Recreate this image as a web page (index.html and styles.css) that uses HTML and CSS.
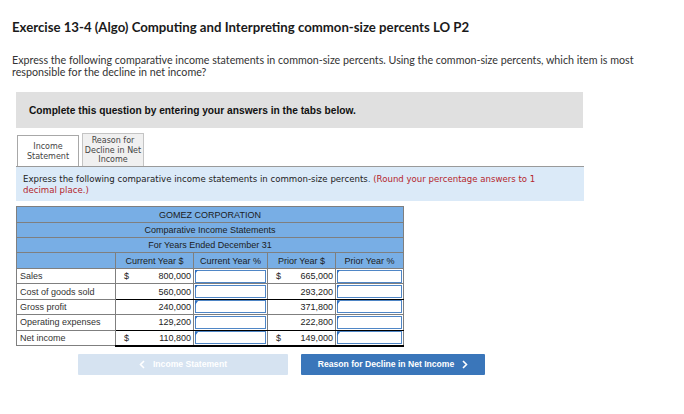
FILE: index.html
```html
<!DOCTYPE html>
<html>
<head>
<meta charset="utf-8">
<link rel="stylesheet" href="styles.css">
</head>
<body>
<h1 class="title">Exercise 13-4 (Algo) Computing and Interpreting common-size percents LO P2</h1>
<p class="intro">Express the following comparative income statements in common-size percents. Using the common-size percents, which item is most responsible for the decline in net income?</p>
<div class="panel">
  <div class="banner">Complete this question by entering your answers in the tabs below.</div>
  <div class="tabs">
    <div class="tab active">Income<br>Statement</div>
    <div class="tab">Reason for<br>Decline in Net<br>Income</div>
  </div>
  <div class="info">Express the following comparative income statements in common-size percents<span class="dot">.</span> <span class="red">(Round your percentage answers to 1</span><br><span class="red">decimal place.)</span></div>
  <table class="stmt">
    <colgroup>
      <col class="c1"><col class="c2"><col class="c3"><col class="c4"><col class="c5">
    </colgroup>
    <tr class="hd h1"><th colspan="5">GOMEZ CORPORATION</th></tr>
    <tr class="hd h2"><th colspan="5">Comparative Income Statements</th></tr>
    <tr class="hd h3"><th colspan="5">For Years Ended December 31</th></tr>
    <tr class="hd h4"><th></th><th>Current Year $</th><th>Current Year %</th><th>Prior Year $</th><th>Prior Year %</th></tr>
    <tr class="row">
      <td class="lbl">Sales</td>
      <td class="num"><span>$</span><span>800,000</span></td>
      <td class="in"><div class="box"></div></td>
      <td class="num"><span>$</span><span>665,000</span></td>
      <td class="in"><div class="box"></div></td>
    </tr>
    <tr class="row line">
      <td class="lbl">Cost of goods sold</td>
      <td class="num"><span></span><span>560,000</span></td>
      <td class="in"><div class="box"></div></td>
      <td class="num"><span></span><span>293,200</span></td>
      <td class="in"><div class="box"></div></td>
    </tr>
    <tr class="row">
      <td class="lbl">Gross profit</td>
      <td class="num"><span></span><span>240,000</span></td>
      <td class="in"><div class="box"></div></td>
      <td class="num"><span></span><span>371,800</span></td>
      <td class="in"><div class="box"></div></td>
    </tr>
    <tr class="row line">
      <td class="lbl">Operating expenses</td>
      <td class="num"><span></span><span>129,200</span></td>
      <td class="in"><div class="box"></div></td>
      <td class="num"><span></span><span>222,800</span></td>
      <td class="in"><div class="box"></div></td>
    </tr>
    <tr class="row total">
      <td class="lbl">Net income</td>
      <td class="num"><span>$</span><span>110,800</span></td>
      <td class="in"><div class="box"></div></td>
      <td class="num"><span>$</span><span>149,000</span></td>
      <td class="in"><div class="box"></div></td>
    </tr>
  </table>
  <div class="nav">
    <div class="btn prev"><svg width="6" height="9" viewBox="0 0 6 9"><path d="M5 1 L1.5 4.5 L5 8" fill="none" stroke="#fff" stroke-width="1.6"/></svg><span>Income Statement</span></div>
    <div class="btn next"><span>Reason for Decline in Net Income</span><svg width="6" height="9" viewBox="0 0 6 9"><path d="M1 1 L4.5 4.5 L1 8" fill="none" stroke="#fff" stroke-width="1.6"/></svg></div>
  </div>
</div>
</body>
</html>
```
FILE: styles.css
```css
html, body {
  margin: 0;
  padding: 0;
  background: #fff;
}
body {
  padding: 20px 0 0 12px;
  font-family: Lato, "Liberation Sans", sans-serif;
  color: #222;
}
.title {
  margin: 0;
  font-size: 13.2px;
  line-height: 15px;
  font-weight: 700;
  color: #1a1a1a;
}
.intro {
  margin: 19px 0 0 0;
  width: 640px;
  font-size: 10.7px;
  line-height: 12px;
  color: #333;
}
.panel {
  margin: 14px 0 0 4px;
  width: 568px;
}
.banner {
  height: 36px;
  width: 567px;
  box-sizing: border-box;
  background: #e0e0e0;
  padding-left: 13px;
  display: flex;
  align-items: center;
  font-family: "Liberation Sans", Arial, sans-serif;
  font-weight: 700;
  font-size: 10.2px;
  color: #111;
}
.tabs {
  display: flex;
  align-items: flex-end;
  gap: 3px;
  margin-top: 5px;
  padding-left: 1px;
}
.tab {
  box-sizing: border-box;
  width: 62px;
  height: 33px;
  border: 1px solid #c4c4c4;
  border-bottom: none;
  background: #f0f0f0;
  font-family: "DejaVu Sans", Verdana, sans-serif;
  font-size: 8px;
  line-height: 9.8px;
  color: #444;
  text-align: center;
  display: flex;
  align-items: center;
  justify-content: center;
  padding-top: 1px;
}
.tab.active {
  width: 62px;
  height: 31px;
  background: #fff;
  border-color: #a8a8a8;
}
.info {
  box-sizing: border-box;
  height: 35px;
  border-top: 1px solid #9a9a9a;
  background: #dbeaf8;
  padding: 7px 20px 0 7px;
  font-family: "DejaVu Sans", Verdana, sans-serif;
  font-size: 8.6px;
  line-height: 10.5px;
  color: #222;
}
.info .red { color: #b5262c; }
.info .dot { color: #2a6cc0; }
.stmt {
  margin-top: 5px;
  border-collapse: collapse;
  table-layout: fixed;
  width: 387px;
  font-family: "Liberation Sans", Arial, sans-serif;
  font-size: 9px;
  color: #222;
}
.c1 { width: 99px; }
.c2 { width: 78px; }
.c3 { width: 74px; }
.c4 { width: 68px; }
.c5 { width: 68px; }
.stmt th, .stmt td {
  border: 1px solid #7f7f7f;
  padding: 0;
}
.hd th {
  background: #78aee5;
  font-weight: 400;
  text-align: center;
  height: 14px;
  color: #1c1c1c;
}
.h1 th { height: 15px; }
.h4 th { height: 15px; }
.row td {
  height: 14.4px;
  background: #fff;
}
.lbl {
  padding-left: 3px !important;
  color: #333;
}
.num {
  padding: 0 2px 0 8px !important;
}
.num span:first-child {
  float: left;
}
.num span:last-child {
  float: right;
}
.in {
  position: relative;
}
.box {
  box-sizing: border-box;
  height: 13px;
  margin: 0 1px;
  border: 1px solid #4f86c6;
  background: #fff;
}
.in::before {
  content: "";
  position: absolute;
  left: 1px;
  top: 1px;
  width: 0;
  height: 0;
  border-top: 4px solid #2e6fc0;
  border-right: 3px solid transparent;
}
.line td.num, .line td.in {
  border-bottom: 1px solid #000;
}
.total td.num, .total td.in {
  border-bottom: 2px solid #000;
}
.nav {
  display: flex;
  gap: 13px;
  margin-top: 7px;
  padding-left: 62px;
}
.btn {
  height: 21px;
  display: flex;
  align-items: center;
  justify-content: center;
  gap: 8px;
  font-family: "Liberation Sans", Arial, sans-serif;
  font-weight: 700;
  font-size: 8.6px;
  color: #fff;
  border-radius: 1px;
}
.btn.prev {
  width: 210px;
  background: #d6e3f1;
}
.btn.next {
  width: 184px;
  background: #3a76ba;
}
```
